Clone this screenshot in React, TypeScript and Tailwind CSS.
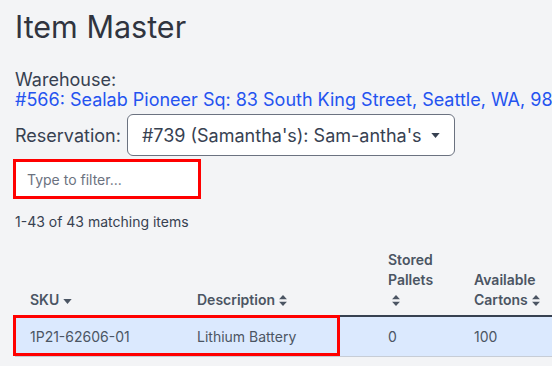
import React from 'react';

function SortBoth() {
  return (
    <svg viewBox="0 0 10 14" className="inline-block w-[8px] h-[11px] ml-1 align-[-1px]" fill="currentColor">
      <path d="M5 0 L10 5.5 H0 Z" />
      <path d="M5 14 L10 8.5 H0 Z" />
    </svg>
  );
}

function SortDown() {
  return (
    <svg viewBox="0 0 10 6" className="inline-block w-[9px] h-[5px] ml-1 align-[1px]" fill="currentColor">
      <path d="M0 0 H10 L5 6 Z" />
    </svg>
  );
}

export default function App() {
  const rows = [{ sku: '1P21-62606-01', description: 'Lithium Battery', pallets: 0, cartons: 100 }];

  return (
    <div
      className="w-[552px] h-[366px] overflow-hidden bg-[#f3f4f6] text-[#374151]"
      style={{ fontFamily: 'Inter, "Noto Sans", sans-serif' }}
    >
      <div className="pl-[15px] pt-[9px]">
        <h1 className="text-[30.5px] leading-[36px] font-normal text-[#30343f]">Item Master</h1>

        <div className="mt-[25px] text-[18px] leading-[20px] whitespace-nowrap">
          <div>Warehouse:</div>
          <a className="text-[#2453f0]">#566: Sealab Pioneer Sq: 83 South King Street, Seattle, WA, 98104</a>
        </div>

        <div className="mt-[4px] flex items-center gap-[6px] text-[18px]">
          <span>Reservation:</span>
          <button className="h-[42px] w-[328px] shrink-0 flex items-center justify-between pl-[14px] pr-[14px] bg-white border border-[#6b7280] rounded-[6px] text-[#374151] whitespace-nowrap">
            <span>#739 (Samantha's): Sam-antha's</span>
            <svg viewBox="0 0 10 6" className="w-[9px] h-[5px]" fill="currentColor">
              <path d="M0 0 H10 L5 6 Z" />
            </svg>
          </button>
        </div>

        <input
          placeholder="Type to filter..."
          className="mt-[3px] -ml-[2px] block w-[188px] h-[40px] bg-white border-[3px] border-[#ff0000] px-[11px] text-[14px] placeholder:text-[#6b7280] outline-none"
        />

        <div className="mt-[13px] text-[14px] leading-[20px]">1-43 of 43 matching items</div>

        <div className="relative mt-[18px]">
          <table className="table-fixed border-collapse w-[600px] text-[14px]">
            <colgroup>
              <col className="w-[167px]" />
              <col className="w-[191px]" />
              <col className="w-[86px]" />
              <col className="w-[156px]" />
            </colgroup>
            <thead>
              <tr className="border-b-2 border-[#374151] text-[#4b5563]">
                <th className="align-bottom text-left font-semibold leading-[20px] px-[15px] pb-[5px]">
                  SKU<SortDown />
                </th>
                <th className="align-bottom text-left font-semibold leading-[20px] px-[15px] pb-[5px]">
                  Description<SortBoth />
                </th>
                <th className="align-bottom text-left font-semibold leading-[20px] px-[15px] pb-[5px]">
                  Stored Pallets<SortBoth />
                </th>
                <th className="align-bottom text-left font-semibold leading-[20px] pl-[15px] pr-[70px] pb-[5px]">
                  Available Cartons<SortBoth />
                </th>
              </tr>
            </thead>
            <tbody>
              {rows.map((row) => (
                <tr key={row.sku} className="bg-[#dbe9fe] border-b border-[#c7cdd6] text-[#4b5563]">
                  <td className="px-[15px] h-[40px]">{row.sku}</td>
                  <td className="px-[15px]">{row.description}</td>
                  <td className="px-[15px]">{row.pallets}</td>
                  <td className="px-[15px]">{row.cartons}</td>
                </tr>
              ))}
            </tbody>
          </table>
          <div className="absolute left-[-2px] bottom-[1px] w-[327px] h-[41px] border-[3px] border-[#ff0000] pointer-events-none" />
        </div>
      </div>
    </div>
  );
}
